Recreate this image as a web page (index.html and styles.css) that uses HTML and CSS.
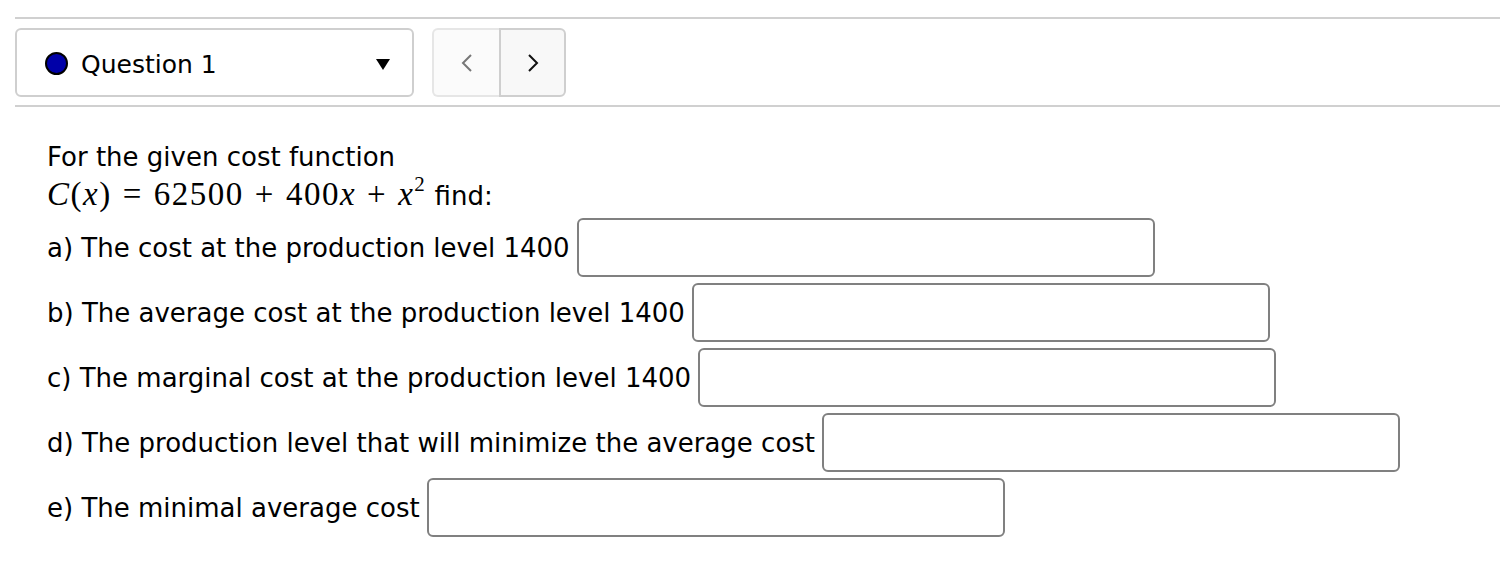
FILE: index.html
```html
<!DOCTYPE html>
<html lang="en">
<head>
  <meta charset="UTF-8">
  <title>Question 1</title>
  <link rel="stylesheet" href="styles.css">
</head>
<body>

  <div class="toolbar">
    <div class="qselect">
      <span class="dot"></span>
      <span class="qname">Question 1</span>
      <span class="caret"></span>
    </div>
    <div class="nav">
      <button class="prev" disabled>
        <svg width="14" height="22" viewBox="0 0 14 22"><path d="M11 3 L3 11 L11 19" fill="none" stroke="#777" stroke-width="2"/></svg>
      </button>
      <button class="next">
        <svg width="14" height="22" viewBox="0 0 14 22"><path d="M3 3 L11 11 L3 19" fill="none" stroke="#111" stroke-width="2"/></svg>
      </button>
    </div>
  </div>

  <div class="question">
    <p class="intro">For the given cost function<br>
      <span class="math"><i>C</i>(<i>x</i>)<span class="op">=</span>62500<span class="op">+</span>400<i>x</i><span class="op">+</span><i>x</i><sup>2</sup></span> find:</p>

    <div class="part">a) The cost at the production level 1400 <input type="text"></div>
    <div class="part">b) The average cost at the production level 1400 <input type="text"></div>
    <div class="part">c) The marginal cost at the production level 1400 <input type="text"></div>
    <div class="part">d) The production level that will minimize the average cost <input type="text"></div>
    <div class="part">e) The minimal average cost <input type="text"></div>
  </div>

</body>
</html>
```

FILE: styles.css
```css
body { margin: 0; padding: 0; background: white; color: #000; font-family: "DejaVu Sans", Verdana, sans-serif; }

.toolbar {
  margin: 17px 0 0 15px;
  padding: 9px 0 8px;
  border-top: 2px solid #d0d0d0;
  border-bottom: 2px solid #d0d0d0;
  display: flex;
  gap: 18px;
}
.qselect {
  width: 399px;
  height: 69px;
  border: 2px solid #cfcfcf;
  border-radius: 6px;
  display: flex;
  align-items: center;
  padding-left: 28px;
  box-sizing: border-box;
}
.dot {
  width: 19px;
  height: 19px;
  border-radius: 50%;
  background: #0000a8;
  border: 2px solid #000;
  margin-right: 13px;
  margin-top: 2px;
}
.qname { font-size: 25px; flex: 1; padding-top: 3px; }
.caret {
  width: 0; height: 0;
  border-left: 7px solid transparent;
  border-right: 7px solid transparent;
  border-top: 11px solid #000;
  margin-right: 22px;
  margin-top: 3px;
}
.nav { display: flex; }
.nav button {
  width: 67px;
  height: 69px;
  background: #f8f8f8;
  border: 2px solid #cfcfcf;
  display: flex;
  align-items: center;
  justify-content: center;
  padding: 0;
}
.nav .prev { background: #fbfbfb; border-color: #e6e6e6; border-right: none; border-radius: 6px 0 0 6px; }
.nav .next { border-radius: 0 6px 6px 0; }

.question { padding: 0 0 0 47px; font-size: 26px; }
.intro { margin: 32px 0 0; line-height: 37px; }
.math { font-family: "Liberation Serif", "DejaVu Serif", serif; font-size: 33px; letter-spacing: 1.5px; }
.math .op { margin: 0 11px; }
.math sup { font-size: 21px; line-height: 0; vertical-align: 14px; }
.part { display: flex; align-items: center; gap: 7px; height: 65px; }
.part input {
  width: 578px;
  height: 59px;
  box-sizing: border-box;
  border: 2px solid #808080;
  border-radius: 6px;
  margin: 0;
}
```
